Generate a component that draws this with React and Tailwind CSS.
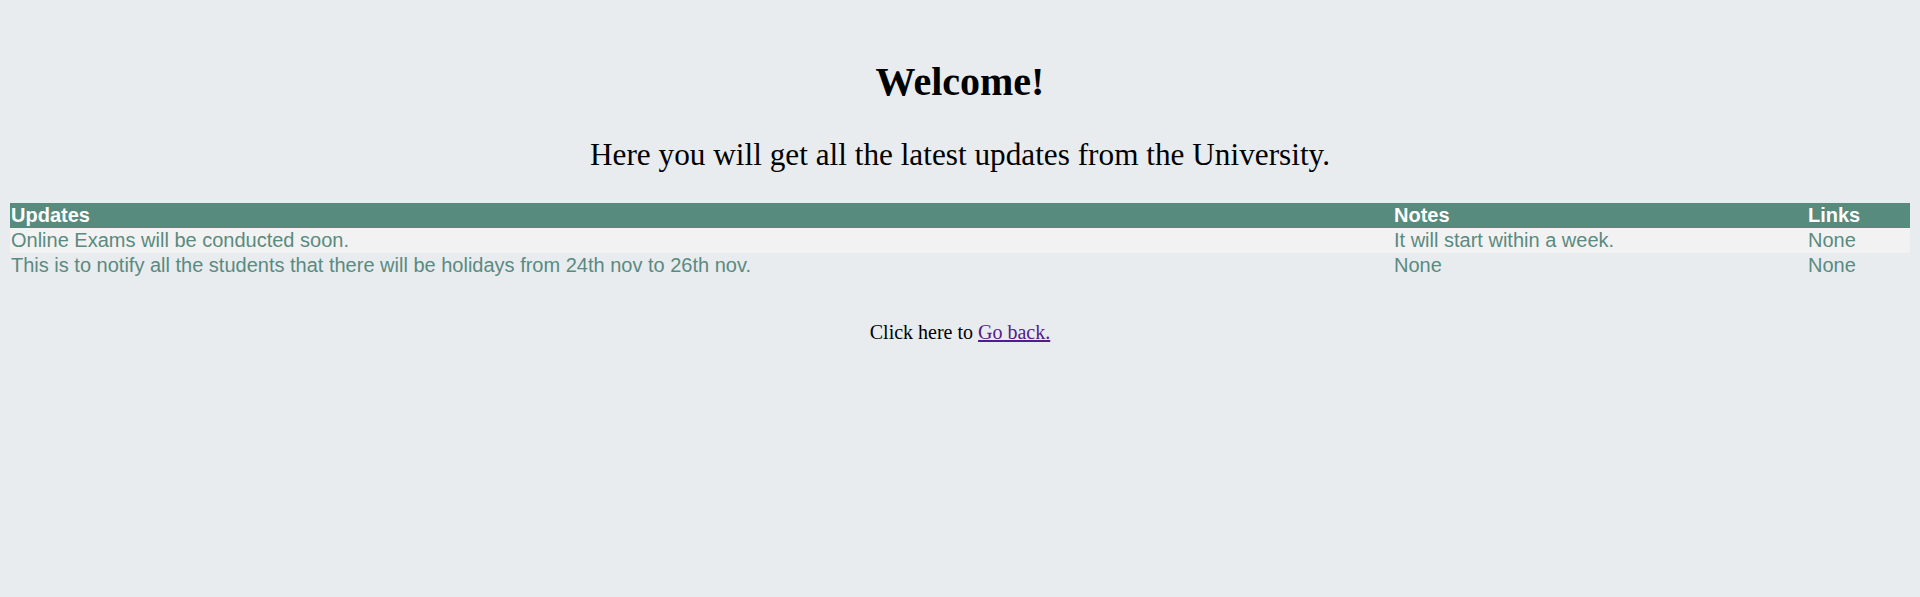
const rows = [
  {
    update: "Online Exams will be conducted soon.",
    note: "It will start within a week.",
    link: "None",
  },
  {
    update: "This is to notify all the students that there will be holidays from 24th nov to 26th nov.",
    note: "None",
    link: "None",
  },
];

export default function App() {
  return (
    <div className="min-h-screen bg-[#e8ecef] font-['Liberation_Serif',serif] text-black">
      <h1 className="pt-[60px] text-center text-[40px] font-bold leading-[44px]">Welcome!</h1>
      <p className="mt-[34px] text-center text-[31.25px] leading-[34px]">
        Here you will get all the latest updates from the University.
      </p>

      {/* updates table */}
      <div className="mx-[10px] mt-[31px] font-['Liberation_Sans',Arial,sans-serif] text-[20px] leading-[23px]">
        <div className="grid grid-cols-[1383px_414px_1fr] bg-[#568b7d] font-bold text-white">
          <div className="px-[1px] py-[1px]">Updates</div>
          <div className="px-[1px] py-[1px]">Notes</div>
          <div className="px-[1px] py-[1px]">Links</div>
        </div>
        {rows.map((r, i) => (
          <div
            key={i}
            className={`grid grid-cols-[1383px_414px_1fr] text-[#5a8a80] ${i % 2 === 0 ? "bg-[#f2f2f2]" : ""}`}
          >
            <div className="px-[1px] py-[1px]">{r.update}</div>
            <div className="px-[1px] py-[1px]">{r.note}</div>
            <div className="px-[1px] py-[1px]">{r.link}</div>
          </div>
        ))}
      </div>

      <p className="mt-[43px] text-center text-[20px] leading-[22px]">
        Click here to{" "}
        <a href="#" className="text-[#551a8b] underline">
          Go back.
        </a>
      </p>
    </div>
  );
}
